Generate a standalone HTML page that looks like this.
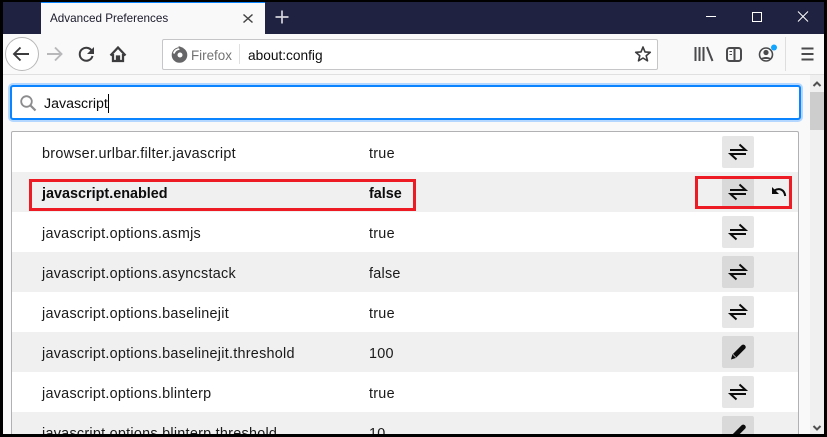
<!DOCTYPE html>
<html><head><meta charset="utf-8">
<style>
html,body{margin:0;padding:0;background:#000}
body{width:827px;height:437px;overflow:hidden;position:relative;font-family:"Liberation Sans",sans-serif}
.a{position:absolute}
#win{left:3px;top:2px;width:821px;height:432px;background:#f9f9fa;overflow:hidden}
.t{position:absolute;white-space:nowrap;font-size:14.4px;color:#1a1a1a;line-height:20px}
.n{letter-spacing:.26px}
.row{position:absolute;left:12px;width:786px;height:40px}
.btn{position:absolute;left:722px;width:32px;height:32px;background:#e6e6e6;border-radius:2px}
.btn.d{background:#d9d9d9}
.btn svg{position:absolute;left:0;top:0}
</style></head><body>
<svg width="0" height="0" style="position:absolute"><defs>
<g id="sw"><path d="M8 14H23.500L17.500 8.500M24 18H8.500L14.500 23.500" fill="none" stroke="#0c0c0d" stroke-width="2"/></g>
<g id="pen"><path d="M9 23.500L10.300 18.600L19.500 9.400C20.500 8.400 22 8.400 23 9.400C24 10.400 24 11.800 23 12.800L13.800 22Z" fill="#0c0c0d"/><path d="M10.800 18.300L14 21.500" stroke="#d9d9d9" stroke-width=".7"/></g>
</defs></svg>

<div class="a" id="win"></div>

<!-- title bar -->
<div class="a" style="left:3px;top:2px;width:821px;height:32px;background:#1f2240"></div>
<div class="a" style="left:41px;top:2px;width:224px;height:32px;background:#f9f9fa"></div>
<div class="a" style="left:41px;top:2px;width:224px;height:1px;background:#0a84ff"></div>
<div class="t" style="left:50px;top:9px;font-size:11.7px;color:#1a1a2a">Advanced Preferences</div>
<svg class="a" style="left:240px;top:11px" width="16" height="16"><path d="M3.500 3.500L12.500 11.500M12.500 3.500L3.500 11.500" stroke="#444" stroke-width="1.500"/></svg>
<svg class="a" style="left:274px;top:9px" width="16" height="16"><path d="M8 1.500V14.500M1.500 8H14.500" stroke="#d4d5dc" stroke-width="1.700"/></svg>
<svg class="a" style="left:700px;top:8px" width="120" height="18" fill="none" stroke="#fff" stroke-width="1">
<path d="M6 8.500H16"/><rect x="52.500" y="4.500" width="9" height="9"/><path d="M98 3.500L108 13.500M108 3.500L98 13.500"/></svg>

<!-- toolbar -->
<div class="a" style="left:3px;top:74px;width:821px;height:1px;background:#e0e0e1"></div>
<div class="a" style="left:5px;top:37px;width:32px;height:32px;border:1px solid #b8b8b8;border-radius:50%;background:#fff"></div>
<svg class="a" style="left:0;top:34px" width="140" height="40" fill="none">
<path d="M29 20H14M20.500 13.500L14 20L20.500 26.500" stroke="#3c3c3e" stroke-width="1.900"/>
<path d="M47 20H61M55 13.500L61.500 20L55 26.500" stroke="#b8b8ba" stroke-width="1.900"/>
<path d="M92.500 18.500A6.500 6.500 0 1 0 92.500 22" stroke="#3c3c3e" stroke-width="2"/>
<path d="M94 13V20H87Z" fill="#3c3c3e"/>
<path d="M110.500 21.500L118 13.500L125.500 21.500M113 20V27H117V22.500H119V27H123V20" stroke="#3c3c3e" stroke-width="2.300"/>
</svg>

<!-- url bar -->
<div class="a" style="left:162px;top:39px;width:494px;height:29px;background:#fff;border:1px solid #c6c6c8;border-radius:2px"></div>
<svg class="a" style="left:170px;top:45px" width="20" height="20">
<circle cx="9.500" cy="10" r="7.800" fill="#666668"/>
<path d="M3.800 8.500A6 6 0 0 1 10 4" fill="none" stroke="#fff" stroke-width="1.800"/>
<path d="M8.500 1L13.500 3L10 6.500Z" fill="#666668"/>
<circle cx="10" cy="10" r="2.500" fill="#fff"/>
</svg>
<div class="t" style="left:191px;top:46px;font-size:13.4px;color:#737373">Firefox</div>
<div class="a" style="left:239px;top:44px;width:1px;height:20px;background:#e0e0e1"></div>
<div class="t" style="left:248px;top:46px;font-size:13.7px;color:#0c0c0d">about:config</div>
<svg class="a" style="left:634px;top:45px" width="18" height="18"><path d="M9 2L11 6.900L16.300 7.300L12.200 10.700L13.500 15.800L9 13L4.500 15.800L5.800 10.700L1.700 7.300L7 6.900Z" fill="none" stroke="#3c3c3e" stroke-width="1.600" stroke-linejoin="round"/></svg>

<!-- right toolbar icons -->
<svg class="a" style="left:690px;top:34px" width="134" height="40" fill="none" stroke="#4a4a4c">
<path d="M5.500 13V27M9.500 13V27M13.500 13V27" stroke-width="2"/>
<path d="M17 13L22.500 27" stroke-width="2"/>
<rect x="37" y="14" width="14" height="13" rx="2.500" stroke-width="2"/>
<path d="M44.500 14V27" stroke-width="2"/><path d="M39.500 17.500H42M39.500 20.500H42" stroke-width="1"/>
<circle cx="76" cy="20.500" r="6.500" stroke-width="1.600"/>
<circle cx="76" cy="18.500" r="2.600" fill="#4a4a4c" stroke="none"/>
<path d="M71 25C72 22.300 80 22.300 81 25Z" fill="#4a4a4c" stroke="none"/>
<circle cx="84" cy="13.500" r="3" fill="#10a5ff" stroke="none"/>
<path d="M95.500 3V37" stroke="#dedee0" stroke-width="1"/>
</svg>
<svg class="a" style="left:801px;top:47px" width="14" height="14"><path d="M0.500 1.500H12.500M0.500 7H12.500M0.500 12.500H12.500" stroke="#4a4a4c" stroke-width="2"/></svg>

<!-- search -->
<div class="a" style="left:10px;top:85px;width:791px;height:35px;box-sizing:border-box;background:#fff;border:2px solid #0a84ff;border-radius:3px;box-shadow:0 0 0 2px #b3d7ff"></div>
<svg class="a" style="left:19px;top:94px" width="18" height="18" fill="none" stroke="#8c8c8e" stroke-width="1.800"><circle cx="7.500" cy="7.500" r="5.300"/><path d="M11.500 11.500L16.500 16.500" stroke-width="2.200"/></svg>
<div class="t" style="left:44px;top:94px;font-size:14.2px;color:#0c0c0d">Javascript</div>
<div class="a" style="left:108px;top:94px;width:1px;height:19px;background:#000"></div>

<!-- scrollbar -->
<div class="a" style="left:810px;top:75px;width:14px;height:359px;background:#f0f0f0"></div>
<div class="a" style="left:810px;top:92px;width:14px;height:38px;background:#cdcdcd"></div>
<svg class="a" style="left:810px;top:79px" width="14" height="10"><path d="M3.500 7L7 3.500L10.500 7" fill="none" stroke="#505050" stroke-width="2"/></svg>
<svg class="a" style="left:810px;top:423px" width="14" height="10"><path d="M3.500 3L7 6.500L10.500 3" fill="none" stroke="#505050" stroke-width="2"/></svg>

<!-- table -->
<div class="a" style="left:11px;top:131px;width:788px;height:303px;box-sizing:border-box;background:#fff;border:1px solid #b1b1b3;border-bottom:0;border-radius:2px 2px 0 0"></div>
<div class="row" style="top:172px;background:#f0f0f1"></div>
<div class="row" style="top:252px;background:#f0f0f1"></div>
<div class="row" style="top:332px;background:#f0f0f1"></div>
<div class="row" style="top:412px;height:22px;background:#f0f0f1"></div>

<div class="a" style="left:0;top:0;width:827px;height:434px;overflow:hidden">
<div class="t n" style="left:42px;top:144px">browser.urlbar.filter.javascript</div><div class="t n" style="left:369px;top:144px">true</div>
<div class="t" style="left:42px;top:184px;font-weight:bold;color:#0c0c0d">javascript.enabled</div><div class="t" style="left:369px;top:184px;font-weight:bold;color:#0c0c0d">false</div>
<div class="t n" style="left:42px;top:224px">javascript.options.asmjs</div><div class="t n" style="left:369px;top:224px">true</div>
<div class="t n" style="left:42px;top:264px">javascript.options.asyncstack</div><div class="t n" style="left:369px;top:264px">false</div>
<div class="t n" style="left:42px;top:304px">javascript.options.baselinejit</div><div class="t n" style="left:369px;top:304px">true</div>
<div class="t n" style="left:42px;top:344px">javascript.options.baselinejit.threshold</div><div class="t n" style="left:369px;top:344px">100</div>
<div class="t n" style="left:42px;top:384px">javascript.options.blinterp</div><div class="t n" style="left:369px;top:384px">true</div>
<div class="t n" style="left:42px;top:424px">javascript.options.blinterp.threshold</div><div class="t n" style="left:369px;top:424px">10</div>

<div class="btn" style="top:136px"><svg width="32" height="32"><use href="#sw"/></svg></div>
<div class="btn d" style="top:176px;height:32px;border-radius:0"><svg width="32" height="32"><use href="#sw"/></svg></div>
<div class="btn" style="top:216px"><svg width="32" height="32"><use href="#sw"/></svg></div>
<div class="btn d" style="top:256px"><svg width="32" height="32"><use href="#sw"/></svg></div>
<div class="btn" style="top:296px"><svg width="32" height="32"><use href="#sw"/></svg></div>
<div class="btn d" style="top:336px"><svg width="32" height="32"><use href="#pen"/></svg></div>
<div class="btn" style="top:376px"><svg width="32" height="32"><use href="#sw"/></svg></div>
<div class="btn d" style="top:416px"><svg width="32" height="32"><use href="#pen"/></svg></div>
</div>
<svg class="a" style="left:768px;top:184px" width="22" height="16" fill="none"><path d="M6.500 6.500C11 3.500 16.500 5.500 17.200 12" stroke="#0c0c0d" stroke-width="2"/><path d="M4 3V10H11Z" fill="#0c0c0d"/></svg>

<!-- red annotations -->
<div class="a" style="left:29px;top:179px;width:387px;height:32px;box-sizing:border-box;border:3px solid #ed1c24"></div>
<div class="a" style="left:695px;top:176px;width:97px;height:33px;box-sizing:border-box;border:3px solid #ed1c24"></div>
</body></html>
